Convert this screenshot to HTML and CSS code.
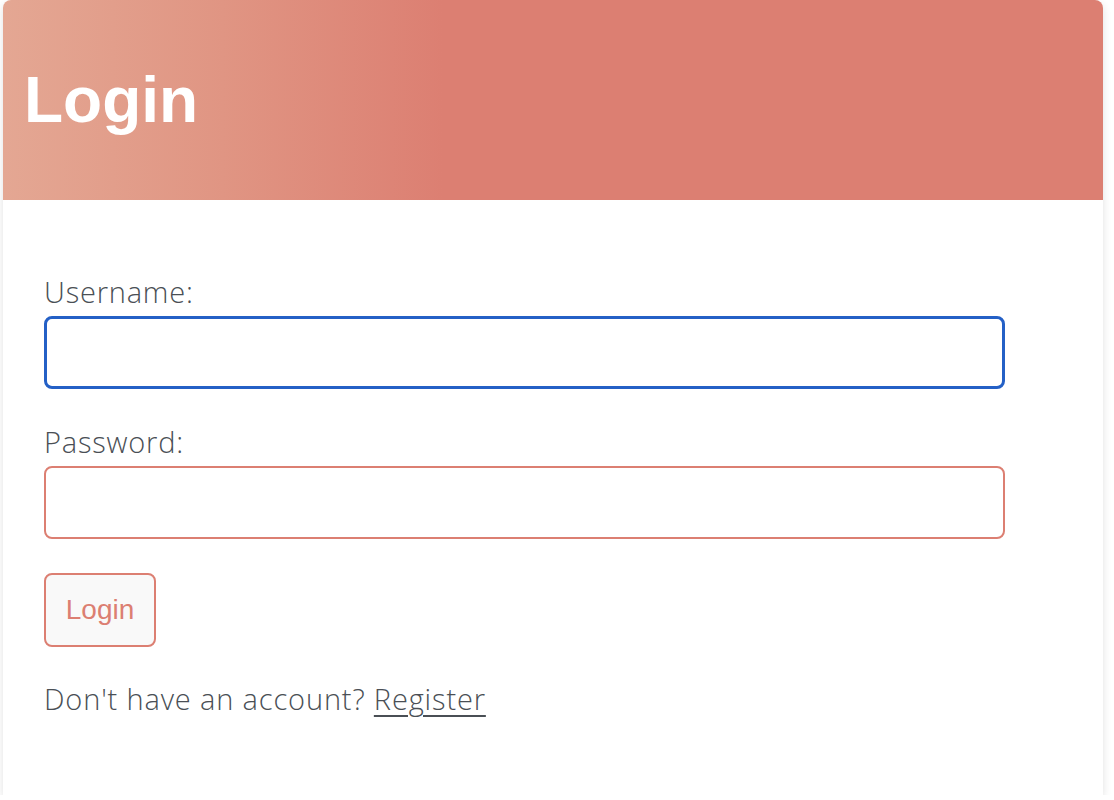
FILE: index.html
```html
<!DOCTYPE html>
<html lang="en">
<head>
<meta charset="utf-8">
<title>Login</title>
<link rel="stylesheet" href="styles.css">
</head>
<body>
<div class="page">
  <div class="card">
    <div class="card-header">
      <h1 class="title">Login</h1>
    </div>
    <form class="card-body">
      <div class="field">
        <label class="label" for="username">Username:</label>
        <input class="input input-focus" id="username" type="text">
      </div>
      <div class="field">
        <label class="label" for="password">Password:</label>
        <input class="input" id="password" type="password">
      </div>
      <button class="btn" type="button">Login</button>
      <p class="footer-text">Don't have an account? <a class="link" href="#">Register</a></p>
    </form>
  </div>
</div>
</body>
</html>
```
FILE: styles.css
```css
* { box-sizing: border-box; }
html, body { margin: 0; padding: 0; background: #ffffff; }
.page {
  padding: 0 11px 0 3px;
}
.card {
  width: 1100px;
  height: 795px;
  background: #fff;
  border-radius: 8px 8px 0 0;
  box-shadow: 0 3px 8px rgba(0,0,0,0.12);
  overflow: hidden;
}
.card-header {
  height: 200px;
  background: linear-gradient(90deg, #e4a793 0%, #e09583 20%, #dc7f72 40%, #dc7f72 100%);
  padding: 68px 21px 0 21px;
}
.title {
  margin: 0;
  color: #fff;
  font-family: "Liberation Sans", Arial, sans-serif;
  font-weight: 700;
  font-size: 64px;
  line-height: 64px;
}
.card-body {
  padding: 72px 41px 0 41px;
  color: #4a4f55;
}
.field {
  margin-bottom: 33px;
}
.field + .field {
  margin-bottom: 34px;
}
.label {
  display: block;
  font-family: "Open Sans", "Lato", sans-serif;
  font-weight: 300;
  font-size: 29px;
  line-height: 40px;
  letter-spacing: 0.8px;
  color: #4a4f55;
  margin-bottom: 4px;
}
.input {
  display: block;
  width: 961px;
  height: 73px;
  border: 2px solid #dc7f72;
  border-radius: 8px;
  background: #fff;
  outline: none;
  font-size: 24px;
}
.input-focus {
  border: 3px solid #2460c6;
}
.btn {
  display: block;
  width: 112px;
  height: 74px;
  border: 2px solid #dc7f72;
  border-radius: 8px;
  background: #f9f9f9;
  color: #dc7f72;
  font-family: "Liberation Sans", Arial, sans-serif;
  font-size: 28px;
  padding: 0;
}
.footer-text {
  margin: 32px 0 0 0;
  font-family: "Open Sans", "Lato", sans-serif;
  font-weight: 300;
  font-size: 29px;
  line-height: 40px;
  letter-spacing: 0.85px;
  color: #4a4f55;
}
.link {
  color: #4a4f55;
  text-decoration: underline;
  text-underline-offset: 5px;
  text-decoration-thickness: 2px;
}
```
